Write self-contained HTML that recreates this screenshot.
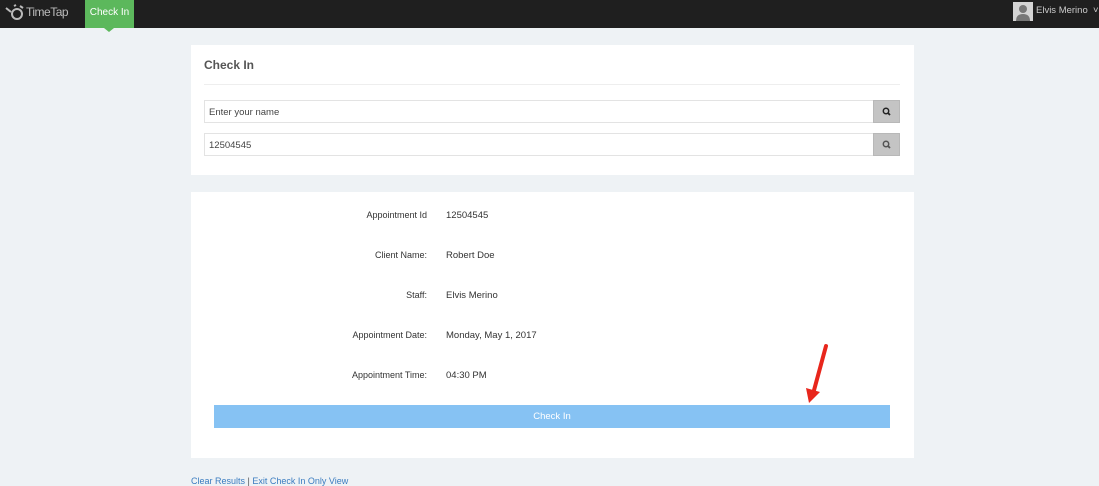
<!DOCTYPE html>
<html><head><style>
*{margin:0;padding:0;box-sizing:border-box}
body{width:1099px;height:484px;overflow:hidden;background:#eef2f5;font-family:"Liberation Sans",sans-serif;font-size:10px;color:#333;position:relative}
.abs{position:absolute}
.top{left:0;top:0;width:1099px;height:28px;background:#1f1f1f}
.tab{left:85px;top:0;width:49px;height:28px;background:#5cb85c;color:#fff;font-size:10px;line-height:25px;text-align:center}
.tri{left:104px;top:28px;width:0;height:0;border-left:5px solid transparent;border-right:5px solid transparent;border-top:4px solid #5cb85c}
.panel{background:#fff}
.inp{border:1px solid #e3e3e3;background:#fff;height:23px;line-height:23px;padding-left:4px;font-size:9.5px;color:#444}
.btn{background:#c4c4c4;border:1px solid #b8b8b8;height:23px}
.lab{width:200px;text-align:right;font-size:9px;color:#333}
.val{font-size:9.5px;color:#333}
</style></head><body>
<div class="abs top"></div>
<div class="abs" style="left:4px;top:3px;color:#bbb;font-size:12px">
<svg width="22" height="20" viewBox="0 0 22 20" style="vertical-align:middle"><circle cx="13" cy="11" r="5" fill="none" stroke="#bbb" stroke-width="2"/><path d="M2 5l5 4M10 3l2-1M16 3l3 2" stroke="#bbb" stroke-width="2"/></svg><span style="letter-spacing:-0.5px">TimeTap</span></div>
<div class="abs tab">Check In</div>
<div class="abs tri"></div>
<div class="abs" style="left:1013px;top:2px;width:20px;height:19px;background:#d4d4d4"><svg width="20" height="19"><circle cx="10" cy="7" r="4" fill="#777"/><path d="M3 19q0-7 7-7t7 7z" fill="#777"/></svg></div>
<div class="abs" style="left:1036px;top:5px;color:#ccc;font-size:9.5px">Elvis Merino &nbsp;˅</div>

<div class="abs panel" style="left:191px;top:45px;width:723px;height:130px"></div>
<div class="abs" style="left:204px;top:58px;font-size:12px;font-weight:bold;color:#555">Check In</div>
<div class="abs" style="left:204px;top:84px;width:696px;height:1px;background:#eee"></div>
<div class="abs inp" style="left:204px;top:100px;width:670px">Enter your name</div>
<div class="abs btn" style="left:873px;top:100px;width:27px"><svg width="25" height="21"><circle cx="12" cy="10" r="2.7" fill="none" stroke="#222" stroke-width="1.5"/><path d="M14 12l2 2" stroke="#222" stroke-width="1.8"/></svg></div>
<div class="abs inp" style="left:204px;top:133px;width:670px">12504545</div>
<div class="abs btn" style="left:873px;top:133px;width:27px"><svg width="25" height="21"><circle cx="12" cy="10" r="2.7" fill="none" stroke="#555" stroke-width="1.5"/><path d="M14 12l2 2" stroke="#555" stroke-width="1.8"/></svg></div>

<div class="abs panel" style="left:191px;top:192px;width:723px;height:266px"></div>
<div class="abs lab" style="left:227px;top:210px">Appointment Id</div><div class="abs val" style="left:446px;top:210px">12504545</div>
<div class="abs lab" style="left:227px;top:250px">Client Name:</div><div class="abs val" style="left:446px;top:250px">Robert Doe</div>
<div class="abs lab" style="left:227px;top:290px">Staff:</div><div class="abs val" style="left:446px;top:290px">Elvis Merino</div>
<div class="abs lab" style="left:227px;top:330px">Appointment Date:</div><div class="abs val" style="left:446px;top:330px">Monday, May 1, 2017</div>
<div class="abs lab" style="left:227px;top:370px">Appointment Time:</div><div class="abs val" style="left:446px;top:370px">04:30 PM</div>
<div class="abs" style="left:214px;top:405px;width:676px;height:23px;background:#86c2f3;color:#fff;font-size:9.5px;line-height:23px;text-align:center">Check In</div>
<svg class="abs" style="left:800px;top:340px" width="35" height="68"><path d="M26 6L13 54" stroke="#e8261c" stroke-width="4" stroke-linecap="round"/><path d="M6 48L9 63L20 52Z" fill="#e8261c"/></svg>
<div class="abs" style="left:191px;top:476px;font-size:9px;color:#3a7cc0">Clear Results <span style="color:#555">|</span> Exit Check In Only View</div>
</body></html>
